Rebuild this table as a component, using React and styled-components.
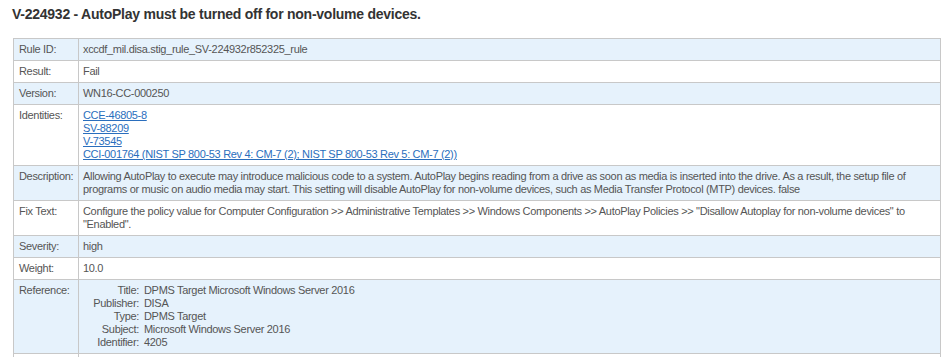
import React from 'react';
import styled, { createGlobalStyle } from 'styled-components';

const GlobalStyle = createGlobalStyle`
  html, body {
    margin: 0;
    padding: 0;
    background: #ffffff;
  }
  body {
    font-family: "Liberation Sans", Arial, sans-serif;
  }
`

const Page = styled.div`
  padding: 7px 5px 0 12px;
`
const Title = styled.h2`
  margin: 0 0 17px 0;
  font-size: 14px;
  line-height: 14px;
  font-weight: bold;
  letter-spacing: -0.25px;
  color: #333333;
`
const Table = styled.table`
  border-collapse: collapse;
  table-layout: fixed;
  width: 928px;
  margin-left: 1px;
  font-size: 11px;
  line-height: 13px;
  letter-spacing: -0.32px;
  color: #555555;
`
const Row = styled.tr`
  background-color: ${(props) => props.$shaded ? '#e6f2fc' : '#ffffff'};
`
const Label = styled.td`
  width: 56px;
  padding: 4px 3px 4px 5px;
  border: 1px solid #c8c8c8;
  vertical-align: top;
  white-space: nowrap;
`
const Value = styled.td`
  padding: 4px 5px 4px 4px;
  border: 1px solid #c8c8c8;
  vertical-align: top;
`
const IdLink = styled.a`
  display: block;
  width: fit-content;
  color: #2a6ebd;
  text-decoration: underline;
`
const RefGrid = styled.div`
  display: grid;
  grid-template-columns: 56px auto;
  column-gap: 5px;
  justify-content: start;
`
const RefKey = styled.span`
  text-align: right;
`

const identities = [
  'CCE-46805-8',
  'SV-88209',
  'V-73545',
  'CCI-001764 (NIST SP 800-53 Rev 4: CM-7 (2); NIST SP 800-53 Rev 5: CM-7 (2))',
];

const reference = [
  ['Title:', 'DPMS Target Microsoft Windows Server 2016'],
  ['Publisher:', 'DISA'],
  ['Type:', 'DPMS Target'],
  ['Subject:', 'Microsoft Windows Server 2016'],
  ['Identifier:', '4205'],
];

const App = () => {
  return (
    <>
      <GlobalStyle />
      <Page>
        <Title>V-224932 - AutoPlay must be turned off for non-volume devices.</Title>
        <Table>
          <tbody>
            <Row $shaded>
              <Label>Rule ID:</Label>
              <Value>xccdf_mil.disa.stig_rule_SV-224932r852325_rule</Value>
            </Row>
            <Row>
              <Label>Result:</Label>
              <Value>Fail</Value>
            </Row>
            <Row $shaded>
              <Label>Version:</Label>
              <Value>WN16-CC-000250</Value>
            </Row>
            <Row>
              <Label>Identities:</Label>
              <Value>
                {identities.map((id) => (
                  <IdLink key={id} href="#">{id}</IdLink>
                ))}
              </Value>
            </Row>
            <Row $shaded>
              <Label>Description:</Label>
              <Value>
                Allowing AutoPlay to execute may introduce malicious code to a system. AutoPlay begins reading from a drive as soon as media is inserted into the drive. As a result, the setup file of programs or music on audio media may start. This setting will disable AutoPlay for non-volume devices, such as Media Transfer Protocol (MTP) devices. false
              </Value>
            </Row>
            <Row>
              <Label>Fix Text:</Label>
              <Value>
                Configure the policy value for Computer Configuration &gt;&gt; Administrative Templates &gt;&gt; Windows Components &gt;&gt; AutoPlay Policies &gt;&gt; "Disallow Autoplay for non-volume devices" to "Enabled".
              </Value>
            </Row>
            <Row $shaded>
              <Label>Severity:</Label>
              <Value>high</Value>
            </Row>
            <Row>
              <Label>Weight:</Label>
              <Value>10.0</Value>
            </Row>
            <Row $shaded>
              <Label>Reference:</Label>
              <Value>
                <RefGrid>
                  {reference.map(([k, v]) => (
                    <React.Fragment key={k}>
                      <RefKey>{k}</RefKey>
                      <span>{v}</span>
                    </React.Fragment>
                  ))}
                </RefGrid>
              </Value>
            </Row>
            <Row>
              <Label>&nbsp;</Label>
              <Value>&nbsp;</Value>
            </Row>
          </tbody>
        </Table>
      </Page>
    </>
  );
};

export default App;
